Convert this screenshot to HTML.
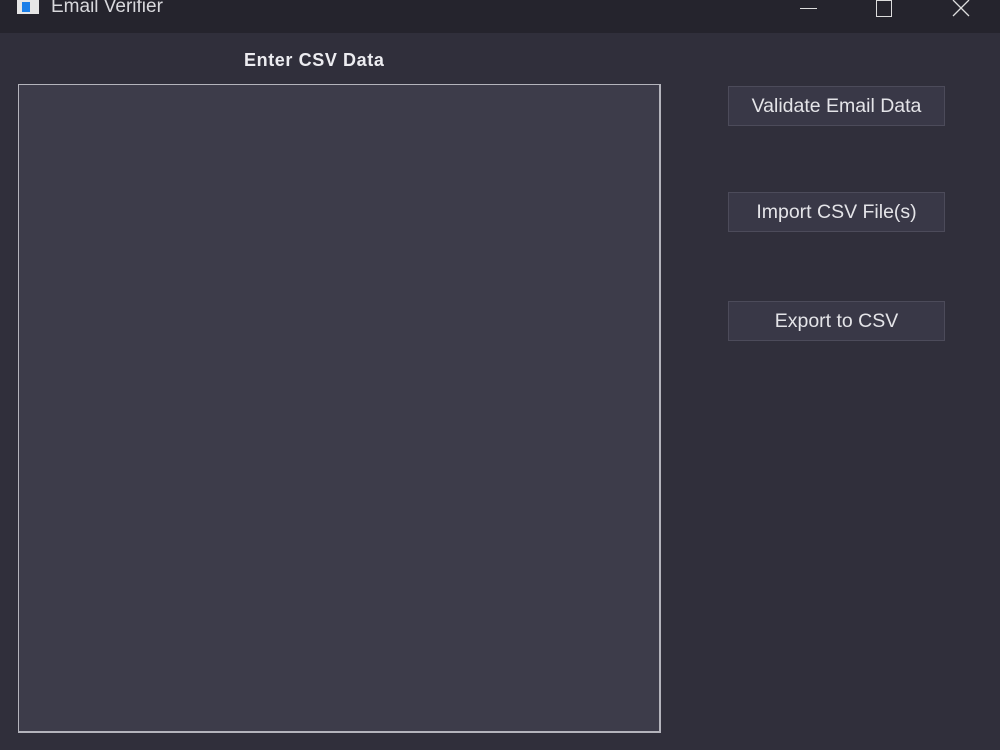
<!DOCTYPE html>
<html><head><style>
body{margin:0;width:1000px;height:750px;overflow:hidden;background:#302f3b;font-family:"Liberation Sans",sans-serif;position:relative}
.tb{position:absolute;left:0;top:0;width:1000px;height:33px;background:#25242d}
.title{position:absolute;left:51px;top:-4px;color:#d8d8dc;font-size:19px}
.ico{position:absolute;left:17px;top:0;width:22px;height:14px;background:#e6e6e6}
.ico i{position:absolute;left:5px;top:2px;width:8px;height:10px;background:#1a7ee8}
.lbl{position:absolute;left:244px;top:50px;color:#ececf0;font-weight:bold;font-size:18px;letter-spacing:0.6px}
.ta{position:absolute;left:18px;top:84px;width:640px;height:646px;background:#3d3c4a;border:2px solid #b4b4bc;border-width:1px 2px 2px 1px}
.btn{position:absolute;left:728px;width:215px;height:38px;background:#393847;border:1px solid #4c4b5a;color:#e4e4e8;font-size:19.5px;text-align:center;line-height:38px}
</style></head><body>
<div class="tb"><div class="ico"><i></i></div><div class="title">Email Verifier</div>
<div style="position:absolute;left:800px;top:8px;width:17px;height:1px;background:#ddd"></div>
<div style="position:absolute;left:876px;top:0;width:14px;height:15px;border:1px solid #ddd"></div>
<svg style="position:absolute;left:952px;top:0" width="18" height="17"><path d="M1 0L17 16M17 0L1 16" stroke="#ddd" stroke-width="1.3"/></svg>
</div>
<div class="lbl">Enter CSV Data</div>
<div class="ta"></div>
<div class="btn" style="top:86px">Validate Email Data</div>
<div class="btn" style="top:192px">Import CSV File(s)</div>
<div class="btn" style="top:301px">Export to CSV</div>
</body></html>
